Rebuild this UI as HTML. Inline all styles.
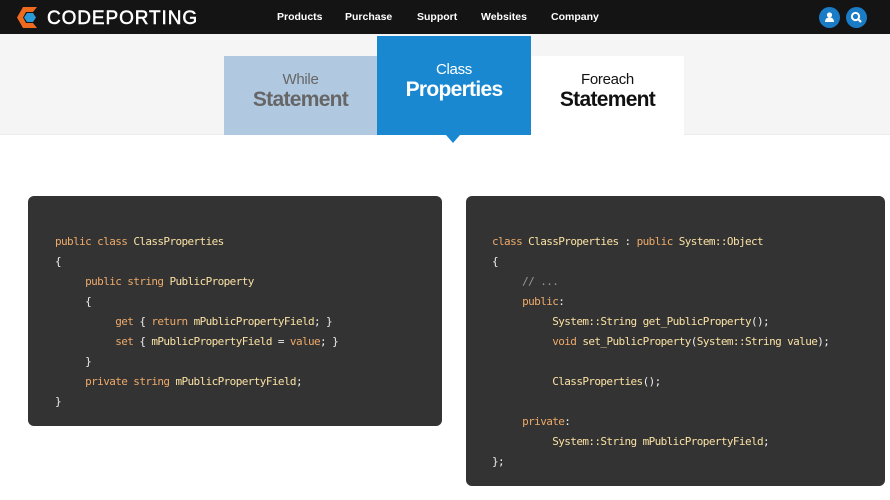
<!DOCTYPE html>
<html><head><meta charset="utf-8"><style>
*{margin:0;padding:0;box-sizing:border-box}
body{width:890px;height:500px;background:#fff;font-family:"Liberation Sans",sans-serif;position:relative;overflow:hidden}
.hdr{position:absolute;left:0;top:0;width:890px;height:34px;background:#141414}
.logo{position:absolute;left:47px;top:8px;color:#fff;font-size:19px;letter-spacing:0.9px;font-weight:normal;-webkit-text-stroke:0.5px #fff}
.nav{position:absolute;top:11px;color:#fff;font-size:10.5px;font-weight:bold}
.ic{position:absolute;top:7px;width:21px;height:21px;border-radius:50%;background:#1a7cc4}
.band{position:absolute;left:0;top:34px;width:890px;height:101px;background:#f5f5f5;border-bottom:1px solid #ececec}
.tab{position:absolute;text-align:center;font-family:"Liberation Sans",sans-serif}
.tab .s{font-size:15px;display:block;letter-spacing:-0.3px}
.tab .b{font-size:21px;font-weight:bold;display:block;letter-spacing:-0.7px}
.code{position:absolute;background:#333;border-radius:6px;font-family:"DejaVu Sans Mono","Liberation Mono",monospace;font-size:11px;letter-spacing:-0.6px;color:#eee;line-height:20px;white-space:pre}
.k{color:#eeaa6a}.i{color:#fbe2a4}.c{color:#999}
</style></head><body>
<div class="hdr">
<svg style="position:absolute;left:17px;top:7px" width="22" height="21" viewBox="0 0 22 21"><polygon points="6,0 20,0 16,5 9,5 6,10.5 9,16 16,16 20,21 6,21 0,10.5" fill="#ee6a1f"/><polygon points="10,6 16,6 19,10.5 16,15 10,15 7,10.5" fill="#2a9ad8"/></svg>
<div class="logo">CODEPORTING</div>
<div class="nav" style="left:277px">Products</div>
<div class="nav" style="left:345px">Purchase</div>
<div class="nav" style="left:417px">Support</div>
<div class="nav" style="left:481px">Websites</div>
<div class="nav" style="left:551px">Company</div>
<div class="ic" style="left:819px"><svg width="21" height="21"><circle cx="10.5" cy="8" r="2.6" fill="#fff"/><path d="M6 15 Q6 10.5 10.5 10.5 Q15 10.5 15 15Z" fill="#fff"/></svg></div>
<div class="ic" style="left:846px"><svg width="21" height="21"><circle cx="9.5" cy="9.5" r="3.6" stroke="#fff" stroke-width="2" fill="none"/><line x1="12" y1="12" x2="15" y2="15" stroke="#fff" stroke-width="2.2"/></svg></div>
</div>
<div class="band"></div>
<div class="tab" style="left:224px;top:56px;width:153px;height:79px;background:#b1c9e0;color:#666;padding-top:15px"><span class="s">While</span><span class="b">Statement</span></div>
<div class="tab" style="left:377px;top:36px;width:154px;height:99px;background:#1a88d0;color:#fff;padding-top:25px"><span class="s">Class</span><span class="b">Properties</span></div>
<div class="tab" style="left:531px;top:56px;width:153px;height:79px;background:#fff;color:#111;padding-top:15px"><span class="s">Foreach</span><span class="b">Statement</span></div>
<div style="position:absolute;left:446px;top:135px;width:0;height:0;border-left:7px solid transparent;border-right:7px solid transparent;border-top:8px solid #1a88d0"></div>

<div class="code" style="left:28px;top:196px;width:414px;height:230px;padding:36px 0 0 27px"><span class="k">public class</span> <span class="i">ClassProperties</span>
{
     <span class="k">public string</span> <span class="i">PublicProperty</span>
     {
          <span class="k">get</span> { <span class="k">return</span> <span class="i">mPublicPropertyField</span>; }
          <span class="k">set</span> { <span class="i">mPublicPropertyField</span> = <span class="k">value</span>; }
     }
     <span class="k">private string</span> <span class="i">mPublicPropertyField</span>;
}</div>

<div class="code" style="left:466px;top:196px;width:419px;height:290px;padding:36px 0 0 26px"><span class="k">class</span> <span class="i">ClassProperties</span> : <span class="k">public</span> <span class="i">System::Object</span>
{
     <span class="c">// ...</span>
     <span class="k">public</span>:
          <span class="i">System::String get_PublicProperty</span>();
          <span class="k">void</span> <span class="i">set_PublicProperty</span>(<span class="i">System::String value</span>);

          <span class="i">ClassProperties</span>();

     <span class="k">private</span>:
          <span class="i">System::String mPublicPropertyField</span>;
};</div>
</body></html>
